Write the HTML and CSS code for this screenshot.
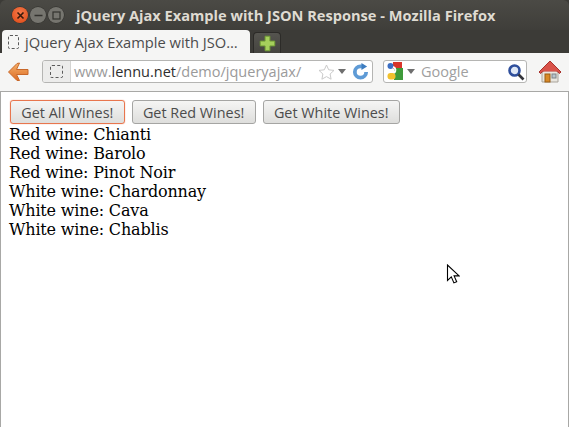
FILE: index.html
```html
<!DOCTYPE html>
<html>
<head>
    <title>jQuery Ajax Example with JSON Response - Mozilla Firefox</title>
    <meta charset="UTF-8" />
    <link rel="stylesheet" href="styles.css">
</head>
<body>
    <div class="window">
        <div class="titlebar">
            <div class="controls">
                <div class="winButton close">
                    <svg width="9" height="9" viewBox="0 0 9 9"><path d="M1.500 1.500l6 6M7.500 1.500l-6 6" stroke="#3a1a0c" stroke-width="1.600"/></svg>
                </div>
                <div class="winButton">
                    <svg width="9" height="9" viewBox="0 0 9 9"><path d="M0.500 4.500h8" stroke="#33322e" stroke-width="1.400"/></svg>
                </div>
                <div class="winButton">
                    <svg width="9" height="9" viewBox="0 0 9 9"><rect x="1" y="1" width="7" height="7" fill="none" stroke="#33322e" stroke-width="1.200"/></svg>
                </div>
            </div>
            <div class="windowTitle">jQuery Ajax Example with JSON Response - Mozilla Firefox</div>
        </div>
        <div class="tabbar">
            <div class="tab">
                <div class="favicon tabIcon"></div>
                <div class="tabLabel">jQuery Ajax Example with JSO…</div>
            </div>
            <div class="newTab">
                <svg width="17" height="17" viewBox="0 0 14 14"><path d="M5 1h4v4h4v4H9v4H5V9H1V5h4z" fill="#a6cf5c" stroke="#6f9a35" stroke-width="0.800"/></svg>
            </div>
        </div>
        <div class="toolbar">
            <svg class="backArrow" width="24" height="20" viewBox="0 0 24 20">
                <defs>
                    <linearGradient id="arrowFill" x1="0" y1="0" x2="0" y2="1">
                        <stop offset="0" stop-color="#f6b26c"/>
                        <stop offset="1" stop-color="#dc6a22"/>
                    </linearGradient>
                </defs>
                <path d="M10 1.500L1.500 10l8.500 8.500h2.500l-3-6h11.500v-5H9.500l3-6.500z" fill="url(#arrowFill)" stroke="#c8682a" stroke-width="1"/>
            </svg>
            <div class="urlbar">
                <div class="identity"><div class="favicon"></div></div>
                <div class="url"><span class="dim">www.</span>lennu.net<span class="dim">/demo/jqueryajax/</span></div>
                <svg class="star" width="17" height="16" viewBox="0 0 17 16"><path d="M8.500 1l2.200 4.800 5.300.6-3.900 3.600 1 5.200-4.600-2.600-4.600 2.600 1-5.200L1 6.400l5.300-.6z" fill="#fff" stroke="#c9c9c9" stroke-width="1"/></svg>
                <div class="dropArrow"></div>
                <svg class="reload" width="17" height="17" viewBox="0 0 18 18">
                    <path d="M15 9.500A6 6 0 1 1 9 3.500h1.500" fill="none" stroke="#5f9bd6" stroke-width="4"/>
                    <path d="M10 0v7.500l6-3.700z" fill="#3d7cc0"/>
                </svg>
            </div>
            <div class="searchbar">
                <svg width="17" height="19" viewBox="0 0 17 19">
                    <rect x="6" y="0" width="9" height="7" fill="#d8352a"/>
                    <rect x="7" y="6" width="9" height="12" fill="#3f9b3b"/>
                    <circle cx="3.500" cy="4" r="3" fill="#3b6fc4"/>
                    <rect x="0.500" y="11" width="8" height="6.500" rx="3" fill="#f2c12e"/>
                    <path d="M6 5c3 1 3 4 1 6" fill="none" stroke="#fff" stroke-width="2"/>
                </svg>
                <div class="dropArrow"></div>
                <div class="searchText">Google</div>
                <svg class="magnifier" width="18" height="18" viewBox="0 0 18 18">
                    <circle cx="7.500" cy="7.500" r="5" fill="#dfe8f6" stroke="#2f4f9c" stroke-width="2.600"/>
                    <path d="M11.500 11.500l5 5" stroke="#33343a" stroke-width="2.600"/>
                </svg>
            </div>
            <svg class="home" width="24" height="24" viewBox="0 0 24 24">
                <path d="M4 11h16v11H4z" fill="#e9e6df" stroke="#a9a49a" stroke-width="1"/>
                <path d="M12 1L1 12l1.500 1.500L12 5l9.500 8.500L23 12z" fill="#d9534a" stroke="#a8322c" stroke-width="1"/>
                <path d="M12 3.500L3.500 11.500h17z" fill="#d9534a"/>
                <rect x="7" y="14" width="5" height="8" fill="#d98a26" stroke="#9a5c14" stroke-width="1"/>
                <rect x="14" y="14" width="4" height="4" fill="#b9c4cc" stroke="#7f8488" stroke-width="1"/>
            </svg>
        </div>
        <div class="content">
            <div class="buttons">
                <button class="wineButton focused">Get All Wines!</button>
                <button class="wineButton">Get Red Wines!</button>
                <button class="wineButton">Get White Wines!</button>
            </div>
            <div class="wine">Red wine: Chianti</div>
            <div class="wine">Red wine: Barolo</div>
            <div class="wine">Red wine: Pinot Noir</div>
            <div class="wine">White wine: Chardonnay</div>
            <div class="wine">White wine: Cava</div>
            <div class="wine">White wine: Chablis</div>
            <svg class="cursor" width="14" height="21" viewBox="0 0 14 21">
                <path d="M1.500 1v15.500l3.800-3.600 2.600 6 2.800-1.200-2.600-5.800h5z" fill="#fff" stroke="#000" stroke-width="1.100"/>
            </svg>
        </div>
    </div>
</body>
</html>
```

FILE: styles.css
```css
html, body
{
    margin: 0;
    padding: 0;
}

body
{
    width: 569px;
    height: 427px;
    overflow: hidden;
    background-color: #3c3b37;
}

.window
{
    display: flex;
    flex-direction: column;
    height: 427px;
    border-radius: 6px 6px 0 0;
    overflow: hidden;
    font-family: "Open Sans", "Noto Sans", sans-serif;
}

.titlebar
{
    display: flex;
    align-items: center;
    height: 30px;
    background: linear-gradient(#4b4a45, #3f3e3a);
}

.controls
{
    display: flex;
    gap: 2px;
    margin-left: 12px;
    width: 64px;
}

.winButton
{
    display: flex;
    align-items: center;
    justify-content: center;
    width: 16px;
    height: 16px;
    border-radius: 50%;
    background: #76756f;
    box-shadow: 0 0 0 0.5px #2e2d2a;
}

.winButton.close
{
    background: radial-gradient(circle at 50% 35%, #f5794a, #dd4814);
}

.windowTitle
{
    color: #dfdbd2;
    font-size: 14.600px;
    font-weight: 700;
    white-space: nowrap;
}

.tabbar
{
    display: flex;
    align-items: flex-end;
    height: 23px;
    padding-left: 2px;
    gap: 3px;
    background: #3c3b37;
}

.tab
{
    display: flex;
    align-items: center;
    gap: 6px;
    width: 248px;
    height: 23px;
    padding-left: 6px;
    box-sizing: border-box;
    border-radius: 4px 4px 0 0;
    background: #f5f5f4;
    color: #4c4c4c;
    font-size: 14.700px;
}

.tabLabel
{
    white-space: nowrap;
}

.favicon
{
    width: 11px;
    height: 11px;
    border: 1px dashed #5a5a5a;
    border-radius: 2px;
}

.tabIcon
{
    width: 9px;
    height: 12px;
}

.newTab
{
    display: flex;
    align-items: center;
    justify-content: center;
    width: 28px;
    height: 21px;
    border: 1px solid #2c2b28;
    border-bottom: none;
    box-sizing: border-box;
    border-radius: 4px 4px 0 0;
    background: linear-gradient(#55544f, #45443f);
}

.toolbar
{
    display: flex;
    align-items: center;
    height: 39px;
    box-sizing: border-box;
    padding: 0 3px 1px 7px;
    background: #f5f5f4;
    border-bottom: 1px solid #a8a8a6;
}

.backArrow
{
    margin-right: 11px;
}

.urlbar, .searchbar
{
    display: flex;
    align-items: center;
    height: 23px;
    box-sizing: border-box;
    border: 1px solid #b5b5b3;
    border-radius: 3px;
    background: #fff;
    overflow: hidden;
}

.urlbar
{
    width: 331px;
    margin-right: 10px;
    font-size: 14.500px;
    color: #2e2e2e;
}

.identity
{
    display: flex;
    align-items: center;
    justify-content: center;
    width: 27px;
    height: 100%;
    background: #ececeb;
    border-right: 1px solid #d4d4d2;
}

.url
{
    margin-left: 3px;
    flex: 1;
    white-space: nowrap;
}

.dim
{
    color: #9a9a9a;
}

.star
{
    margin-right: 3px;
}

.dropArrow
{
    width: 0;
    height: 0;
    border-left: 4px solid transparent;
    border-right: 4px solid transparent;
    border-top: 5px solid #6e6e6e;
}

.reload
{
    margin: 0 3px 0 6px;
}

.searchbar
{
    width: 144px;
    margin-right: 11px;
    padding-left: 3px;
}

.searchbar .dropArrow
{
    margin-left: 3px;
}

.searchText
{
    flex: 1;
    margin-left: 6px;
    color: #a0a0a0;
    font-size: 14.500px;
}

.magnifier
{
    margin-right: 1px;
}

.content
{
    position: relative;
    flex: 1;
    padding: 8px 8px 0 9px;
    background: #fff;
    border-left: 1px solid #a8a8a6;
    border-right: 1px solid #a8a8a6;
    font-family: "DejaVu Serif", serif;
    font-size: 16px;
    letter-spacing: -0.170px;
    line-height: 19px;
    color: #000;
}

.wine
{
    margin-left: -1px;
}

.buttons
{
    display: flex;
    gap: 7px;
    height: 25px;
}

.wineButton
{
    height: 24px;
    padding: 0 10.300px;
    border: 1px solid #a5a5a3;
    border-radius: 3px;
    background: linear-gradient(#f5f5f4, #dededc);
    color: #4c4c4c;
    font-family: "Open Sans", "Noto Sans", sans-serif;
    font-size: 14.400px;
    letter-spacing: 0;
}

.wineButton.focused
{
    border-color: #e8764e;
    box-shadow: 0 0 1px #e8764e;
}

.cursor
{
    position: absolute;
    left: 445px;
    top: 172px;
}
```
